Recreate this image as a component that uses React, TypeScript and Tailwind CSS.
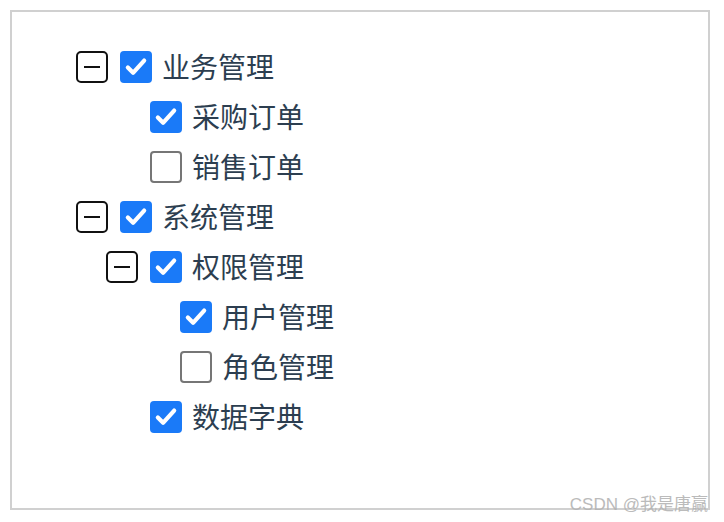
import React from 'react';

type Node = {
  label: string;
  checked: boolean;
  children?: Node[];
};

const tree: Node[] = [
  {
    label: '业务管理',
    checked: true,
    children: [
      { label: '采购订单', checked: true },
      { label: '销售订单', checked: false },
    ],
  },
  {
    label: '系统管理',
    checked: true,
    children: [
      {
        label: '权限管理',
        checked: true,
        children: [
          { label: '用户管理', checked: true },
          { label: '角色管理', checked: false },
        ],
      },
      { label: '数据字典', checked: true },
    ],
  },
];

const Toggle = () => (
  <div className="w-8 h-8 rounded-[5px] border-2 border-[#111] flex items-center justify-center shrink-0">
    <div className="w-[16px] h-[2px] bg-[#111]" />
  </div>
);

const Checkbox = ({ checked }: { checked: boolean }) =>
  checked ? (
    <div className="w-8 h-8 rounded-[4px] bg-[#1a7af8] flex items-center justify-center shrink-0">
      <svg width="28" height="28" viewBox="0 0 24 24" fill="none" stroke="white" strokeWidth="3.6" strokeLinecap="round" strokeLinejoin="round">
        <path d="M5 12.5l4.5 4.5L19 6.5" />
      </svg>
    </div>
  ) : (
    <div className="w-8 h-8 rounded-[4px] border-2 border-[#767676] bg-white shrink-0" />
  );

const TreeRows = ({ nodes, level }: { nodes: Node[]; level: number }) => (
  <>
    {nodes.map((n) => (
      <React.Fragment key={n.label}>
        <div className="h-[50px] flex items-center" style={{ paddingLeft: level * 30 }}>
          <div className="w-[44px] shrink-0">{n.children ? <Toggle /> : null}</div>
          <Checkbox checked={n.checked} />
          <span className="ml-[10px] mb-[3px] text-[28px] leading-none text-[#2c3e50]">{n.label}</span>
        </div>
        {n.children ? <TreeRows nodes={n.children} level={level + 1} /> : null}
      </React.Fragment>
    ))}
  </>
);

export default function App() {
  return (
    <div className="p-[10px] bg-white" style={{ fontFamily: '"Noto Sans CJK SC", "Noto Sans", sans-serif' }}>
      <div className="relative w-[700px] h-[500px] border-2 border-[#d0d0d0] pt-[30px] pl-[64px]">
        <TreeRows nodes={tree} level={0} />
        <span className="absolute right-0 bottom-[-9px] text-[17px] text-[#b4b4b4] opacity-90" style={{ fontFamily: '"Liberation Sans", "Noto Sans CJK SC", sans-serif' }}>
          CSDN @我是唐赢
        </span>
      </div>
    </div>
  );
}
